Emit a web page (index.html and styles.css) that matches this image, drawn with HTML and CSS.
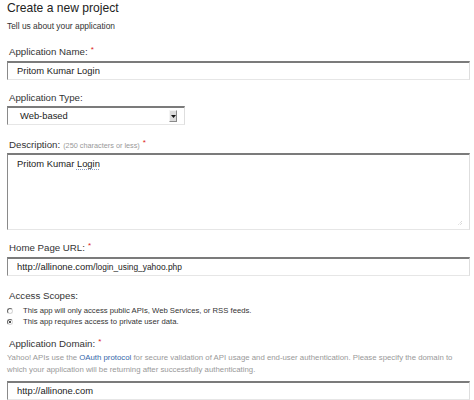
FILE: index.html
```html
<!DOCTYPE html>
<html>
<head>
<meta charset="utf-8">
<link rel="stylesheet" href="styles.css">
</head>
<body>
<div class="page">
  <h1 class="title">Create a new project</h1>
  <p class="intro">Tell us about your application</p>

  <div class="label label-first">Application Name: <span class="req">*</span></div>
  <div class="field field-input"><span class="val">Pritom Kumar Login</span></div>

  <div class="label label-next">Application Type:</div>
  <div class="field field-select">
    <span class="val">Web-based</span>
    <span class="drop">
      <svg width="5" height="3" viewBox="0 0 5 3"><path d="M0 0H5L2.5 3Z" fill="#111"/></svg>
    </span>
  </div>

  <div class="label label-mid">Description: <span class="hint">(250 characters or less)</span> <span class="req">*</span></div>
  <div class="field field-area">
    <span class="val">Pritom Kumar <span class="spell">Login</span></span>
    <svg class="grip" width="6" height="6" viewBox="0 0 6 6"><path d="M5 1L1 5M5 3L3 5M5 5L5 5" stroke="#bbb" stroke-width="0.8" stroke-dasharray="1 1"/></svg>
  </div>

  <div class="label label-next">Home Page URL: <span class="req">*</span></div>
  <div class="field field-input field-gap"><span class="val">http://allinone.com/<span class="small">login_using_yahoo.php</span></span></div>

  <div class="label label-mid">Access Scopes:</div>
  <div class="options">
    <div class="option"><span class="radio"></span>This app will only access public APIs, Web Services, or RSS feeds.</div>
    <div class="option"><span class="radio checked"></span>This app requires access to private user data.</div>
  </div>

  <div class="label label-domain">Application Domain: <span class="req">*</span></div>
  <p class="help">Yahoo! APIs use the <span class="link">OAuth protocol</span> for secure validation of API usage and end-user authentication. Please specify the domain to<br>which your application will be returning after successfully authenticating.</p>
  <div class="field field-input field-last"><span class="val">http://allinone.com</span></div>
</div>
</body>
</html>
```

FILE: styles.css
```css
body {
  margin: 0;
  background: #fff;
  font-family: "Liberation Sans", Arial, sans-serif;
  color: #333;
}

.page {
  display: flex;
  flex-direction: column;
  align-items: flex-start;
  padding-left: 7px;
  width: 463px;
}

.title {
  margin: 0;
  height: 16px;
  font-size: 12.1px;
  line-height: 17px;
  font-weight: normal;
  color: #222;
}

.intro {
  margin: 5px 0 0;
  font-size: 8.4px;
  line-height: 11px;
  color: #333;
}

.label {
  display: flex;
  align-items: flex-start;
  gap: 3px;
  height: 12px;
  padding-left: 2px;
  font-size: 9.7px;
  line-height: 12px;
  color: #333;
}

.label-first { margin-top: 14px; }
.label-next { margin-top: 12px; }
.label-mid { margin-top: 14px; }
.label-domain { margin-top: 11px; }

.req {
  color: #d22;
  font-size: 8px;
  line-height: 8px;
}

.hint {
  font-size: 7.3px;
  line-height: 13px;
  color: #999;
}

.field {
  box-sizing: border-box;
  display: flex;
  align-items: center;
  width: 463px;
  height: 19px;
  padding-left: 9px;
  border-style: solid;
  border-width: 2px 1px 1px 1px;
  border-color: #7b7b7b #dedede #e6e6e6 #8a8a8a;
  background: #fff;
  font-size: 9.4px;
  line-height: 12px;
  color: #222;
}

.field-input { margin-top: 3px; }
.field-gap { margin-top: 3px; }
.field-last { margin-top: 5px; }

.field-select {
  margin-top: 2px;
  width: 178px;
  padding-left: 12px;
}

.drop {
  display: flex;
  align-items: center;
  justify-content: center;
  margin-left: auto;
  margin-right: 7px;
  width: 8px;
  height: 12px;
  background: #dcdcdc;
  border: 1px solid;
  border-color: #f4f4f4 #8a8a8a #8a8a8a #f4f4f4;
  box-sizing: border-box;
}

.field-area {
  position: relative;
  margin-top: 2px;
  height: 77px;
  align-items: flex-start;
  padding-top: 3px;
}

.grip {
  position: absolute;
  right: 6px;
  bottom: 3px;
}

.spell {
  text-decoration: underline dotted #8899bb;
  text-underline-offset: 2px;
}

.small {
  font-size: 8.4px;
}

.options {
  display: flex;
  flex-direction: column;
  margin-top: 3px;
}

.option {
  display: flex;
  align-items: center;
  height: 11px;
  font-size: 7.7px;
  color: #333;
}

.radio {
  box-sizing: border-box;
  display: flex;
  align-items: center;
  justify-content: center;
  width: 6px;
  height: 6px;
  margin-right: 10px;
  border-radius: 50%;
  border: 1px solid;
  border-color: #666 #d8d8d8 #d8d8d8 #666;
  background: #fff;
}

.radio.checked::after {
  content: "";
  width: 2px;
  height: 2px;
  border-radius: 50%;
  background: #111;
}

.help {
  margin: 2px 0 0;
  font-size: 7.8px;
  line-height: 12px;
  white-space: nowrap;
  color: #999;
}

.link {
  color: #3366aa;
}
```
